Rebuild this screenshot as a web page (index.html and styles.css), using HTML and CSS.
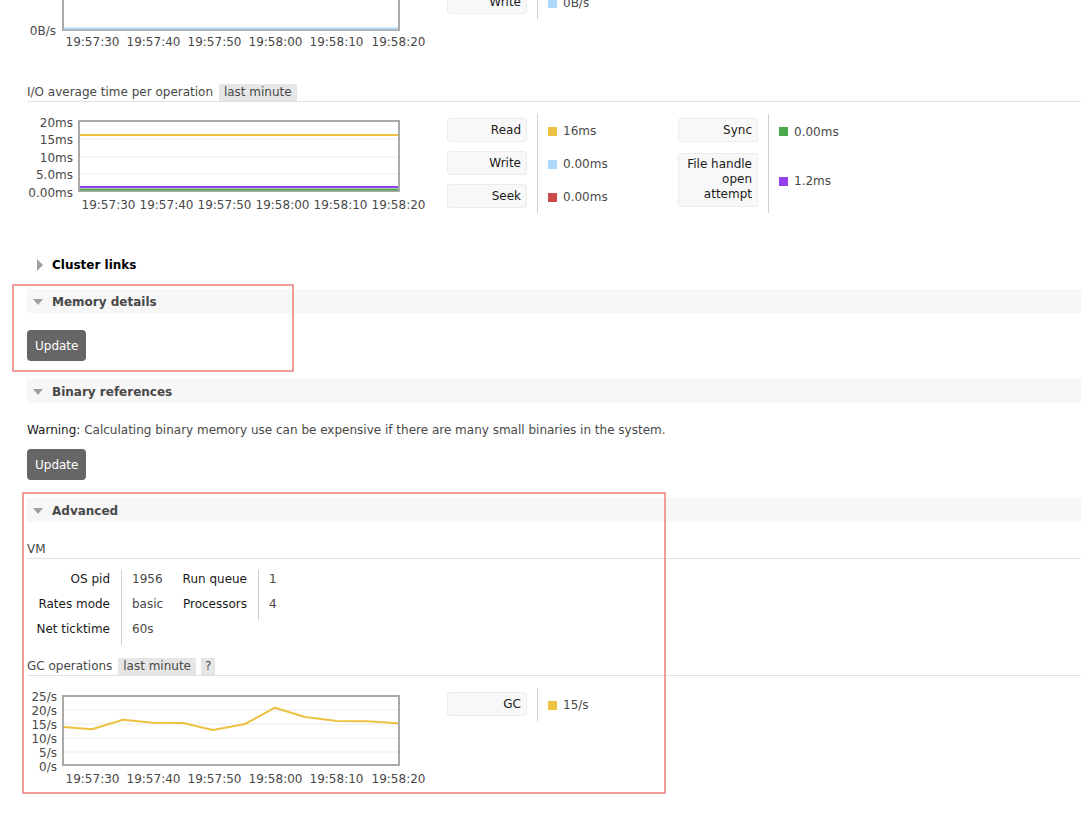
FILE: index.html
```html
<!DOCTYPE html>
<html>
<head>
<meta charset="utf-8">
<link rel="stylesheet" href="styles.css">
</head>
<body>
<div class="page">

  <div class="chart-row top-row">
    <div class="chart">
      <svg width="420" height="98" viewBox="0 0 420 98">
        <rect x="36" y="8" width="336" height="69" fill="#fff" stroke="#aaa" stroke-width="2"/>
        <line x1="37" y1="75.5" x2="371" y2="75.5" stroke="#afd8f8" stroke-width="2"/>
        <text class="ax" x="29" y="82" text-anchor="end">0B/s</text>
        <text class="ax" x="65.5" y="93" text-anchor="middle">19:57:30</text>
        <text class="ax" x="126.5" y="93" text-anchor="middle">19:57:40</text>
        <text class="ax" x="187.5" y="93" text-anchor="middle">19:57:50</text>
        <text class="ax" x="248.5" y="93" text-anchor="middle">19:58:00</text>
        <text class="ax" x="309.5" y="93" text-anchor="middle">19:58:10</text>
        <text class="ax" x="371.5" y="93" text-anchor="middle">19:58:20</text>
      </svg>
    </div>
    <div class="legend">
      <div class="lg-col">
        <div class="lg-label"><div class="box">Read</div></div>
        <div class="lg-value"><span class="sw sw-yellow"></span>0B/s</div>
        <div class="lg-label"><div class="box">Write</div></div>
        <div class="lg-value"><span class="sw sw-blue"></span>0B/s</div>
      </div>
    </div>
  </div>

  <h3 class="subhead">I/O average time per operation <span class="badge">last minute</span></h3>

  <div class="chart-row io-row">
    <div class="chart">
      <svg width="420" height="98" viewBox="0 0 420 98">
        <rect x="52" y="7" width="320" height="70" fill="#fff" stroke="#aaa" stroke-width="2"/>
        <line x1="53" y1="25" x2="371" y2="25" stroke="#ebebeb" stroke-width="1"/>
        <line x1="53" y1="43" x2="371" y2="43" stroke="#ebebeb" stroke-width="1"/>
        <line x1="53" y1="60" x2="371" y2="60" stroke="#ebebeb" stroke-width="1"/>
        <line x1="53" y1="21" x2="371" y2="21" stroke="#edc240" stroke-width="2"/>
        <line x1="53" y1="73" x2="371" y2="73" stroke="#9440ed" stroke-width="2"/>
        <line x1="53" y1="75.5" x2="371" y2="75.5" stroke="#4da74d" stroke-width="2"/>
        <text class="ax" x="46" y="13" text-anchor="end">20ms</text>
        <text class="ax" x="46" y="30" text-anchor="end">15ms</text>
        <text class="ax" x="46" y="48" text-anchor="end">10ms</text>
        <text class="ax" x="46" y="65" text-anchor="end">5.0ms</text>
        <text class="ax" x="46" y="83" text-anchor="end">0.00ms</text>
        <text class="ax" x="81.5" y="95" text-anchor="middle">19:57:30</text>
        <text class="ax" x="139.5" y="95" text-anchor="middle">19:57:40</text>
        <text class="ax" x="197.5" y="95" text-anchor="middle">19:57:50</text>
        <text class="ax" x="255.5" y="95" text-anchor="middle">19:58:00</text>
        <text class="ax" x="313.5" y="95" text-anchor="middle">19:58:10</text>
        <text class="ax" x="371.5" y="95" text-anchor="middle">19:58:20</text>
      </svg>
    </div>
    <div class="legend">
      <div class="lg-col">
        <div class="lg-label"><div class="box">Read</div></div>
        <div class="lg-value"><span class="sw sw-yellow"></span>16ms</div>
        <div class="lg-label"><div class="box">Write</div></div>
        <div class="lg-value"><span class="sw sw-blue"></span>0.00ms</div>
        <div class="lg-label"><div class="box">Seek</div></div>
        <div class="lg-value"><span class="sw sw-red"></span>0.00ms</div>
      </div>
      <div class="lg-col">
        <div class="lg-label"><div class="box">Sync</div></div>
        <div class="lg-value"><span class="sw sw-green"></span>0.00ms</div>
        <div class="lg-label"><div class="box box-multi">File handle<br>open<br>attempt</div></div>
        <div class="lg-value"><span class="sw sw-purple"></span>1.2ms</div>
      </div>
    </div>
  </div>

  <h2 class="sec-head collapsed"><span class="tri-right"></span>Cluster links</h2>

  <h2 class="sec-head sec-memory"><span class="tri-down"></span>Memory details</h2>
  <button class="btn btn-first">Update</button>

  <h2 class="sec-head sec-spaced"><span class="tri-down"></span>Binary references</h2>
  <p class="warning"><span class="warn-label">Warning:</span> Calculating binary memory use can be expensive if there are many small binaries in the system.</p>
  <button class="btn btn-second">Update</button>

  <h2 class="sec-head sec-spaced"><span class="tri-down"></span>Advanced</h2>

  <h3 class="subhead vm-head">VM</h3>
  <div class="facts">
    <div class="f-th">OS pid</div>
    <div class="f-td">1956</div>
    <div class="f-th">Run queue</div>
    <div class="f-td">1</div>

    <div class="f-th">Rates mode</div>
    <div class="f-td">basic</div>
    <div class="f-th">Processors</div>
    <div class="f-td">4</div>

    <div class="f-th">Net ticktime</div>
    <div class="f-td">60s</div>
    <div class="f-empty"></div>
    <div class="f-empty"></div>
  </div>

  <h3 class="subhead gc-head">GC operations <span class="badge">last minute</span><span class="badge badge-q">?</span></h3>

  <div class="chart-row gc-row">
    <div class="chart">
      <svg width="420" height="98" viewBox="0 0 420 98">
        <rect x="36" y="8" width="336" height="69" fill="#fff" stroke="#aaa" stroke-width="2"/>
        <line x1="37" y1="22" x2="371" y2="22" stroke="#ebebeb" stroke-width="1"/>
        <line x1="37" y1="36" x2="371" y2="36" stroke="#ebebeb" stroke-width="1"/>
        <line x1="37" y1="50" x2="371" y2="50" stroke="#ebebeb" stroke-width="1"/>
        <line x1="37" y1="64" x2="371" y2="64" stroke="#ebebeb" stroke-width="1"/>
        <polyline fill="none" stroke="#edc240" stroke-width="2" stroke-linejoin="round"
          points="37,39 65,41.3 96,31.7 126,34.7 156,35 186,42 218,36 248,19.7 278,29 310,33 340,33.3 371,35.3"/>
        <text class="ax" x="30" y="13" text-anchor="end">25/s</text>
        <text class="ax" x="30" y="27" text-anchor="end">20/s</text>
        <text class="ax" x="30" y="41" text-anchor="end">15/s</text>
        <text class="ax" x="30" y="55" text-anchor="end">10/s</text>
        <text class="ax" x="30" y="69" text-anchor="end">5/s</text>
        <text class="ax" x="30" y="83" text-anchor="end">0/s</text>
        <text class="ax" x="65.5" y="95" text-anchor="middle">19:57:30</text>
        <text class="ax" x="126.5" y="95" text-anchor="middle">19:57:40</text>
        <text class="ax" x="187.5" y="95" text-anchor="middle">19:57:50</text>
        <text class="ax" x="248.5" y="95" text-anchor="middle">19:58:00</text>
        <text class="ax" x="309.5" y="95" text-anchor="middle">19:58:10</text>
        <text class="ax" x="371.5" y="95" text-anchor="middle">19:58:20</text>
      </svg>
    </div>
    <div class="legend">
      <div class="lg-col">
        <div class="lg-label"><div class="box">GC</div></div>
        <div class="lg-value"><span class="sw sw-yellow"></span>15/s</div>
      </div>
    </div>
  </div>

  <div class="mark mark-memory"></div>
  <div class="mark mark-advanced"></div>
</div>
</body>
</html>
```

FILE: styles.css
```css
html, body {
  margin: 0;
  padding: 0;
  background: #fff;
  overflow: hidden;
}

body {
  font-family: "DejaVu Sans", Verdana, sans-serif;
  font-size: 12px;
  color: #484848;
}

.page {
  position: relative;
  display: flow-root;
  padding-left: 27px;
  height: 818px;
}

.ax {
  font-family: "DejaVu Sans", Verdana, sans-serif;
  font-size: 12px;
  fill: #484848;
}

.chart-row {
  display: flex;
  align-items: flex-start;
}

.top-row { margin-top: -47px; }
.io-row { margin-top: 12px; }
.gc-row { margin-top: 12px; }

.chart {
  width: 420px;
  flex: none;
}

.chart svg { display: block; }

.legend {
  display: flex;
}

.lg-col {
  display: grid;
  grid-template-columns: 90px 141px;
}

.lg-label {
  padding: 4px 10px 5px 0;
}

.box {
  box-sizing: border-box;
  width: 80px;
  background: #f8f8f8;
  border: 1px solid #ececec;
  border-radius: 3px;
  padding: 4px 5px 3px 0;
  line-height: 15px;
  text-align: right;
  color: #1a1a1a;
}

.box-multi {
  padding: 3px 5px 4px 0;
}

.lg-value {
  border-left: 1px solid #cfcfcf;
  padding: 5px 0 4px 10px;
  display: flex;
  align-items: center;
  gap: 6px;
}

.sw {
  width: 9px;
  height: 9px;
  flex: none;
}
.sw-yellow { background: #edc240; }
.sw-blue { background: #afd8f8; }
.sw-red { background: #cb4b4b; }
.sw-green { background: #4da74d; }
.sw-purple { background: #9440ed; }

.subhead {
  margin: 33px 0 0;
  font-size: 12px;
  font-weight: normal;
  line-height: 17px;
  border-bottom: 1px solid #e0e0e0;
  color: #484848;
}

.badge {
  display: inline-block;
  background: #e6e6e6;
  padding: 0 5px;
  margin-left: 2px;
  line-height: 17px;
}

.badge-q {
  margin-left: 5px;
  padding: 0 4px;
}

.vm-head { margin-top: 19px; }
.gc-head { margin-top: 13px; }

.sec-head {
  box-sizing: border-box;
  margin: 0;
  height: 24px;
  padding-top: 2px;
  font-size: 12px;
  font-weight: bold;
  line-height: 22px;
  display: flex;
  align-items: center;
  background: #f7f7f7;
  color: #484848;
  padding-left: 6px;
}

.sec-head.collapsed {
  background: none;
  color: #000;
  margin-top: 39px;
  padding-left: 10px;
}

.sec-memory { margin-top: 13px; }
.sec-spaced { margin-top: 18px; }

.tri-down {
  width: 0;
  height: 0;
  border-left: 5px solid transparent;
  border-right: 5px solid transparent;
  border-top: 6px solid #a0a0a0;
  margin-right: 9px;
}

.tri-right {
  width: 0;
  height: 0;
  border-top: 6px solid transparent;
  border-bottom: 6px solid transparent;
  border-left: 6px solid #a0a0a0;
  margin-right: 9px;
}

.btn {
  box-sizing: border-box;
  display: block;
  font-family: "DejaVu Sans", Verdana, sans-serif;
  font-size: 12px;
  color: #fff;
  background: #666;
  border: none;
  border-radius: 4px;
  height: 31px;
  padding: 2px 8px 0;
  line-height: 29px;
}

.btn-first { margin-top: 17px; }
.btn-second { margin-top: 11px; }

.warning {
  margin: 19px 0 0;
  line-height: 16px;
}

.warn-label { color: #1a1a1a; }

.facts {
  margin-top: 11px;
  display: grid;
  grid-template-columns: 95px 50px 87px auto;
  line-height: 15px;
}

.f-th {
  text-align: right;
  padding: 2px 11px 8px 0;
  border-right: 1px solid #cfcfcf;
  color: #1a1a1a;
}

.f-td {
  padding: 2px 0 8px 10px;
}

.mark {
  position: absolute;
  box-sizing: border-box;
  border: 2px solid #f39b9b;
  pointer-events: none;
}

.mark-memory {
  left: 12px;
  top: 284px;
  width: 282px;
  height: 88px;
}

.mark-advanced {
  left: 22px;
  top: 492px;
  width: 644px;
  height: 302px;
}
```
